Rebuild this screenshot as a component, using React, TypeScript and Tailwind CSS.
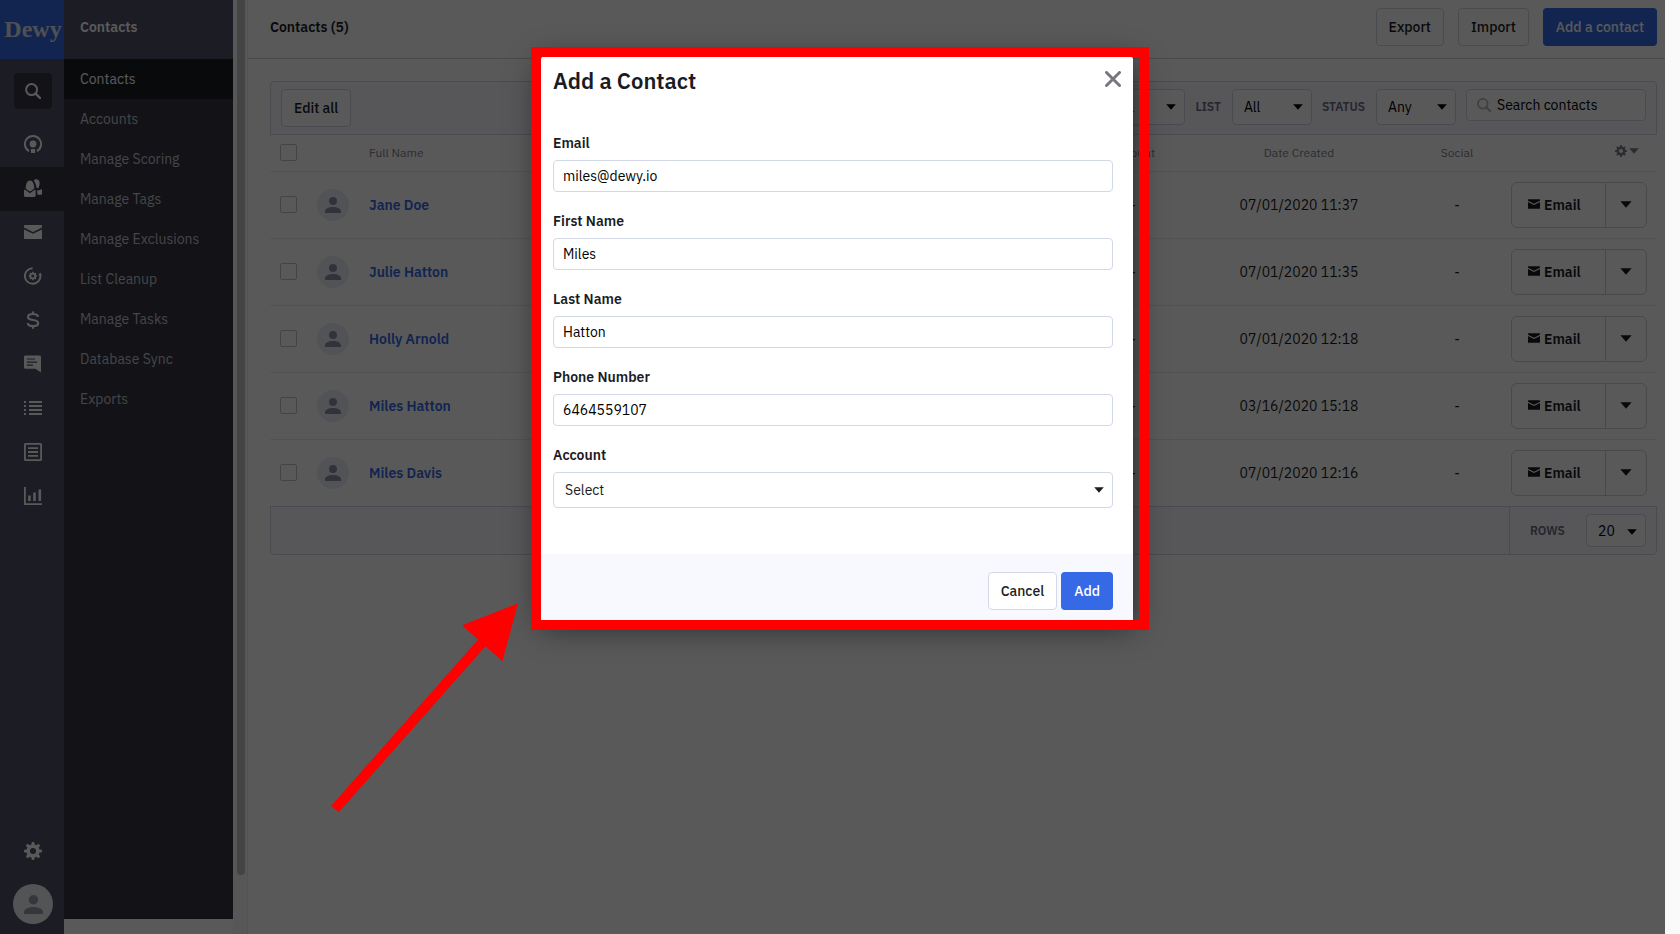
import React from "react";

const navItems = [
  "Contacts",
  "Accounts",
  "Manage Scoring",
  "Manage Tags",
  "Manage Exclusions",
  "List Cleanup",
  "Manage Tasks",
  "Database Sync",
  "Exports",
];

const contacts = [
  { name: "Jane Doe", created: "07/01/2020 11:37" },
  { name: "Julie Hatton", created: "07/01/2020 11:35" },
  { name: "Holly Arnold", created: "07/01/2020 12:18" },
  { name: "Miles Hatton", created: "03/16/2020 15:18" },
  { name: "Miles Davis", created: "07/01/2020 12:16" },
];

const fields = [
  { id: "email", label: "Email", value: "miles@dewy.io" },
  { id: "first-name", label: "First Name", value: "Miles" },
  { id: "last-name", label: "Last Name", value: "Hatton" },
  { id: "phone", label: "Phone Number", value: "6464559107" },
];

function Gear({ className }: { className: string }) {
  return (
    <svg viewBox="0 0 20 20" className={className} aria-hidden="true" fill="none" stroke="currentColor">
      <circle cx="10" cy="10" r="5.4" strokeWidth="4" />
      <path
        d="M10 3V1.6M10 17V18.4M3 10H1.6M17 10H18.4M5.1 5.1L4.1 4.1M14.9 14.9L15.9 15.9M5.1 14.9L4.1 15.9M14.9 5.1L15.9 4.1"
        strokeWidth="3.4"
        strokeLinecap="round"
      />
    </svg>
  );
}

function Envelope({ className }: { className: string }) {
  return (
    <svg viewBox="0 0 18 14" className={className} aria-hidden="true">
      <path
        d="M0 0.8Q0 0 0.8 0H17.2Q18 0 18 0.8V2L9 6.6L0 2zM0 3.9L9 8.5L18 3.9V13.2Q18 14 17.2 14H0.8Q0 14 0 13.2z"
        fill="currentColor"
      />
    </svg>
  );
}

function Caret({ className }: { className: string }) {
  return (
    <svg viewBox="0 0 10 6" className={className} aria-hidden="true">
      <path d="M0.2 0.2H9.8L5 5.8z" fill="currentColor" />
    </svg>
  );
}

function Person({ className }: { className: string }) {
  return (
    <svg viewBox="0 0 16 16" className={className} aria-hidden="true">
      <circle cx="8" cy="4" r="4" fill="currentColor" />
      <path d="M0 16v-1.8C0 11.4 4.5 10 8 10s8 1.4 8 4.2V16z" fill="currentColor" />
    </svg>
  );
}

function Search({ className }: { className: string }) {
  return (
    <svg viewBox="0 0 16 16" className={className} aria-hidden="true" fill="none" stroke="currentColor">
      <circle cx="6.6" cy="6.6" r="5.5" strokeWidth="2" />
      <path d="M10.6 10.6L15 15" strokeWidth="2.4" strokeLinecap="round" />
    </svg>
  );
}

const railIcons: { name: string; icon: React.ReactNode }[] = [
  {
    name: "Campaigns",
    icon: (
      <>
        <path d="M5 16.1A8.1 8.1 0 1 1 13 16.1" fill="none" stroke="currentColor" strokeWidth="1.9" />
        <circle cx="9" cy="9" r="3.4" fill="currentColor" />
        <rect x="6.9" y="14" width="4.2" height="4" fill="currentColor" />
      </>
    ),
  },
  {
    name: "Contacts",
    icon: (
      <g fill="currentColor">
        <path d="M1.6 9.3C2 5 3.2 1.6 6 1.6s4 3.4 4.4 7.7L8.6 11 6 12.6 3.4 11z" />
        <path d="M0 10.6L2.2 11.6 6 14.2 9.6 11.6 11.6 10.6V16.4Q11.6 18 10 18H1.6Q0 18 0 16.4z" />
        <path d="M9.8 1.6C10.6 0.4 12 0 13.4 0.4C15.6 1 15.9 3.4 15.5 6L14.4 9.6L12.4 8.6C12 6 11.4 3.8 9.8 1.6z" />
        <path d="M13 11.2L14.6 11.6L18 10V14.6Q18 16 16.4 16L13.4 15.4z" />
      </g>
    ),
  },
  {
    name: "Email",
    icon: (
      <path
        d="M0 2.8Q0 2 0.8 2H17.2Q18 2 18 2.8V4.6L9 8.9L0 4.6zM0 6.4L9 10.8L18 6.4V15.2Q18 16 17.2 16H0.8Q0 16 0 15.2z"
        fill="currentColor"
      />
    ),
  },
  {
    name: "Automation",
    icon: (
      <g fill="none" stroke="currentColor">
        <path d="M8.6 1.2A7.8 7.8 0 1 0 16.4 8" strokeWidth="1.9" />
        <path d="M14.2 8.6L16.2 5.4L18 8.6z" fill="currentColor" stroke="none" />
        <circle cx="8.8" cy="9" r="2.4" strokeWidth="1.7" />
        <path
          d="M8.8 4.8V6.4M8.8 11.6V13.2M4.6 9H6.2M11.4 9H13M5.8 6L7 7.2M10.6 10.8L11.8 12M5.8 12L7 10.8M10.6 7.2L11.8 6"
          strokeWidth="1.5"
        />
      </g>
    ),
  },
  {
    name: "Deals",
    icon: (
      <path
        d="M13.9 6C13.9 4 12.4 3 9 3S4 4.2 4 6S5.4 8.6 9 9S14.2 10.4 14.2 12.2S12.6 15 9 15S3.8 13.9 3.8 12M9 0.4V3M9 15V17.8"
        fill="none"
        stroke="currentColor"
        strokeWidth="2.2"
      />
    ),
  },
  {
    name: "Conversations",
    icon: (
      <path
        d="M1.4 0.4H15.6Q17 0.4 17 1.8V17.4L11.4 13.8H1.4Q0 13.8 0 12.4V1.8Q0 0.4 1.4 0.4zM2.8 3.4V4.6H11V3.4zM2.8 6.5V7.7H13V6.5zM2.8 9.6V10.8H9V9.6z"
        fill="currentColor"
        fillRule="evenodd"
      />
    ),
  },
  {
    name: "Lists",
    icon: (
      <path
        d="M0 3H2M5 3H18M0 7H2M5 7H18M0 11H2M5 11H18M0 15H2M5 15H18"
        stroke="currentColor"
        strokeWidth="1.9"
      />
    ),
  },
  {
    name: "Forms",
    icon: (
      <g fill="none" stroke="currentColor" strokeWidth="1.8">
        <rect x="0.9" y="0.9" width="16.2" height="16.2" rx="0.6" />
        <path d="M4 5.1H14M4 9H14M4 12.9H14" />
      </g>
    ),
  },
  {
    name: "Reports",
    icon: (
      <g fill="none" stroke="currentColor">
        <path d="M0.9 0V17.1H18" strokeWidth="1.8" />
        <path d="M5.4 8.4V14M10.5 5.4V14M15.8 2.4V14" strokeWidth="2.6" />
      </g>
    ),
  },
];

function FilterSelect({ label, value }: { label: string; value: string }) {
  return (
    <label className="flex items-center gap-[11px] text-xs font-semibold text-[#6a6a85]">
      {label}
      <span className="relative flex">
        <select
          className="h-9 w-20 appearance-none rounded border border-[#d5d8e6] bg-white px-[11px] text-sm font-normal text-black"
          defaultValue={value}
        >
          <option>{value}</option>
        </select>
        <Caret className="pointer-events-none absolute right-[9px] top-[15px] h-1.5 w-2.5 text-black" />
      </span>
    </label>
  );
}

function Sidebar() {
  return (
    <div className="flex min-h-screen shrink-0">
      <div className="flex w-16 flex-col items-center bg-[#505069] text-white">
        <a
          href="#home"
          className="flex h-[59px] w-full items-center justify-center bg-[#3569e6] pb-0.5 pl-0.5 font-['Liberation_Serif',serif] text-2xl font-bold text-[#e0e4ee]"
        >
          Dewy
        </a>
        <button
          aria-label="Search"
          className="mt-3.5 mb-3.5 ml-0.5 flex h-9 w-[38px] items-center justify-center rounded bg-[#343643]"
        >
          <Search className="size-4" />
        </button>
        <nav className="w-full">
          {railIcons.map((item) => (
            <a
              key={item.name}
              href={"#" + item.name}
              aria-label={item.name}
              className={
                item.name === "Contacts"
                  ? "flex h-11 items-center justify-center bg-[#363644] pb-0.5 pl-0.5"
                  : "flex h-11 items-center justify-center pb-0.5 pl-0.5"
              }
            >
              <svg viewBox="0 0 18 18" className="size-[18px]" aria-hidden="true">
                {item.icon}
              </svg>
            </a>
          ))}
        </nav>
        <div className="mt-auto mb-2.5 flex flex-col items-center gap-6 pl-0.5">
          <button aria-label="Settings">
            <Gear className="size-[18px]" />
          </button>
          <button
            aria-label="Profile"
            className="flex size-10 items-center justify-center rounded-full bg-[#eef0f5]"
          >
            <Person className="size-[19px] text-[#9c9fae]" />
          </button>
        </div>
      </div>
      <div className="mb-[15px] w-[169px] bg-[#343643] text-sm">
        <h2 className="flex h-[59px] items-center bg-[#505069] px-4 pb-[5px] font-semibold text-white">Contacts</h2>
        <nav>
          {navItems.map((item, i) => (
            <a
              key={item}
              href={"#" + item}
              className={
                i === 0
                  ? "flex h-10 items-center bg-[#1c1e24] px-4 text-white"
                  : "flex h-10 items-center px-4 text-[#c5c6cd]"
              }
            >
              {item}
            </a>
          ))}
        </nav>
      </div>
      <div className="flex w-[15px] justify-end border-r border-[#ededed] bg-[#fafafa] pr-0.5 pb-[59px]">
        <div className="w-2 rounded-b-full bg-[#c2c2c2]" />
      </div>
    </div>
  );
}

const secondary =
  "flex h-[38px] items-center rounded border border-[#d5d8e6] bg-white px-3 text-sm font-medium text-[#1a1c24]";

export default function App() {
  return (
    <div className="relative min-h-screen bg-[#fafafa] pr-[15px] font-['IBM_Plex_Sans',Roboto,sans-serif] text-[#1a1c24]">
      <div className="flex bg-white">
        <Sidebar />
        <main className="min-w-0 grow">
          <header className="flex h-[59px] items-center gap-3.5 border-b border-[#d0d2da] pr-2 pl-[22px] pb-1">
            <h1 className="mr-auto text-sm font-semibold">Contacts (5)</h1>
            <button className={secondary}>Export</button>
            <button className={secondary}>Import</button>
            <button className="flex h-[38px] items-center rounded bg-[#3569e6] px-[13px] text-sm font-medium text-white">
              Add a contact
            </button>
          </header>
          <section className="mt-[22px] mr-2 ml-[22px]">
            <div className="flex h-[54px] items-start gap-2.5 rounded-t border border-[#d5d8e6] bg-[#f8f9ff] px-2.5 pt-[7px]">
              <button className={secondary + " mr-auto"}>Edit all</button>
              <FilterSelect label="OWNER" value="All" />
              <FilterSelect label="LIST" value="All" />
              <FilterSelect label="STATUS" value="Any" />
              <label className="flex h-8 w-[180px] items-center gap-1.5 rounded border border-[#d5d8e6] bg-white px-2.5">
                <Search className="size-3.5 shrink-0 text-[#b5b5bb]" />
                <input
                  aria-label="Search contacts"
                  placeholder="Search contacts"
                  className="w-full min-w-0 bg-transparent text-sm placeholder:text-black"
                />
              </label>
            </div>
            <table className="w-full table-fixed text-sm">
              <colgroup>
                <col className="w-[47px]" />
                <col className="w-[52px]" />
                <col />
                <col className="w-[124px]" />
                <col className="w-[208px]" />
                <col className="w-[108px]" />
                <col className="w-[146px]" />
              </colgroup>
              <thead>
                <tr className="h-9 border-b border-[#ebebef] text-xs text-[#7d7f90]">
                  <th className="pl-2.5">
                    <input
                      type="checkbox"
                      aria-label="Select all"
                      className="block size-[17px] appearance-none rounded-xs border border-[#c4c4c8]"
                    />
                  </th>
                  <td />
                  <th className="text-left font-normal">Full Name</th>
                  <th className="font-normal">Account</th>
                  <th className="font-normal">Date Created</th>
                  <th className="font-normal">Social</th>
                  <th>
                    <button aria-label="Columns" className="ml-auto mr-[18px] flex items-center gap-0.5 pb-1">
                      <Gear className="size-3" />
                      <Caret className="h-1.5 w-2.5" />
                    </button>
                  </th>
                </tr>
              </thead>
              <tbody>
                {contacts.map((c) => (
                  <tr key={c.name} className="h-[67px] border-b border-[#ebebef] last:border-b-0">
                    <td className="pl-2.5">
                      <input
                        type="checkbox"
                        aria-label={"Select " + c.name}
                        className="block size-[17px] appearance-none rounded-xs border border-[#c4c4c8]"
                      />
                    </td>
                    <td>
                      <span className="flex size-8 items-center justify-center rounded-full bg-[#eceef5]">
                        <Person className="size-4 text-[#9193a6]" />
                      </span>
                    </td>
                    <td>
                      <a href={"#" + c.name} className="font-semibold text-[#3569e6]">
                        {c.name}
                      </a>
                    </td>
                    <td className="text-center">-</td>
                    <td className="text-center">{c.created}</td>
                    <td className="text-center">-</td>
                    <td>
                      <div className="flex h-[46px] w-[136px] rounded-md border border-[#cfd1d8]">
                        <button className="flex w-[94px] items-center gap-1 border-r border-[#cfd1d8] pl-4 font-semibold">
                          <Envelope className="mb-0.5 h-2.5 w-3" />
                          Email
                        </button>
                        <button aria-label="More actions" className="flex grow items-center justify-center">
                          <Caret className="h-[7px] w-3" />
                        </button>
                      </div>
                    </td>
                  </tr>
                ))}
              </tbody>
            </table>
            <div className="flex h-[49px] justify-end rounded-b border border-[#d5d8e6] bg-[#f8f9ff]">
              <label className="flex w-[147px] items-center justify-between border-l border-[#d5d8e6] pr-2.5 pl-5 text-xs font-semibold text-[#6a6a85]">
                ROWS
                <span className="relative flex">
                  <select
                    className="h-[33px] w-[60px] appearance-none rounded border border-[#d5d8e6] bg-white px-[11px] text-sm font-normal text-black"
                    defaultValue="20"
                  >
                    <option>20</option>
                  </select>
                  <Caret className="pointer-events-none absolute right-[9px] top-[15px] h-1.5 w-2.5 text-black" />
                </span>
              </label>
            </div>
          </section>
        </main>
      </div>

      <div className="absolute inset-y-0 left-0 right-[15px] bg-black/65" />

      <div className="absolute inset-x-0 top-[47px] flex justify-center">
        <div className="relative p-2.5 pr-4 after:pointer-events-none after:absolute after:inset-0 after:border-[10px] after:border-[#ff0000]">
          <form
            role="dialog"
            aria-labelledby="dialog-title"
            className="w-[592px] rounded-t-xs bg-white shadow-[0_6px_32px_rgba(0,0,0,0.6)]"
          >
            <div className="flex items-start justify-between px-3 pt-2">
              <h2 id="dialog-title" className="text-[22px] leading-8 font-semibold">
                Add a Contact
              </h2>
              <button type="button" aria-label="Close" className="mt-1.5">
                <svg viewBox="0 0 16 16" className="size-4" aria-hidden="true">
                  <path d="M1.5 1.5L14.5 14.5M14.5 1.5L1.5 14.5" stroke="#77787d" strokeWidth="3" strokeLinecap="round" />
                </svg>
              </button>
            </div>
            <div className="flex flex-col gap-[19px] pt-9 pr-5 pb-[46px] pl-3 text-sm">
              {fields.map((f) => (
                <div key={f.id} className="flex flex-col gap-[7px]">
                  <label htmlFor={f.id} className="leading-5 font-semibold">
                    {f.label}
                  </label>
                  <input
                    id={f.id}
                    defaultValue={f.value}
                    className="h-8 w-full rounded border border-[#d3d8e6] bg-white px-[9px] text-black"
                  />
                </div>
              ))}
              <div className="flex flex-col gap-[7px]">
                <label htmlFor="account" className="leading-5 font-semibold">
                  Account
                </label>
                <div className="relative">
                  <select
                    id="account"
                    defaultValue="Select"
                    className="block h-9 w-full appearance-none rounded border border-[#d3d8e6] bg-white px-[11px] text-[#1a1c24]"
                  >
                    <option>Select</option>
                  </select>
                  <Caret className="pointer-events-none absolute right-[9px] top-[15px] h-1.5 w-2.5" />
                </div>
              </div>
            </div>
            <div className="flex h-[66px] items-center justify-end gap-1 bg-[#f8f9ff] pt-2 pr-5">
              <button type="button" className={secondary}>
                Cancel
              </button>
              <button
                type="submit"
                className="flex h-[38px] items-center rounded bg-[#3569e6] px-[13px] text-sm font-medium text-white"
              >
                Add
              </button>
            </div>
          </form>
        </div>
      </div>

      <svg
        viewBox="0 0 190 212"
        className="pointer-events-none absolute top-[603px] left-[330px] h-[212px] w-[190px]"
        aria-hidden="true"
      >
        <path d="M5 206L154 37.5" stroke="#ff0000" strokeWidth="10" />
        <path d="M188 0.3L132 22.3L172.4 58.2z" fill="#ff0000" />
      </svg>
    </div>
  );
}
